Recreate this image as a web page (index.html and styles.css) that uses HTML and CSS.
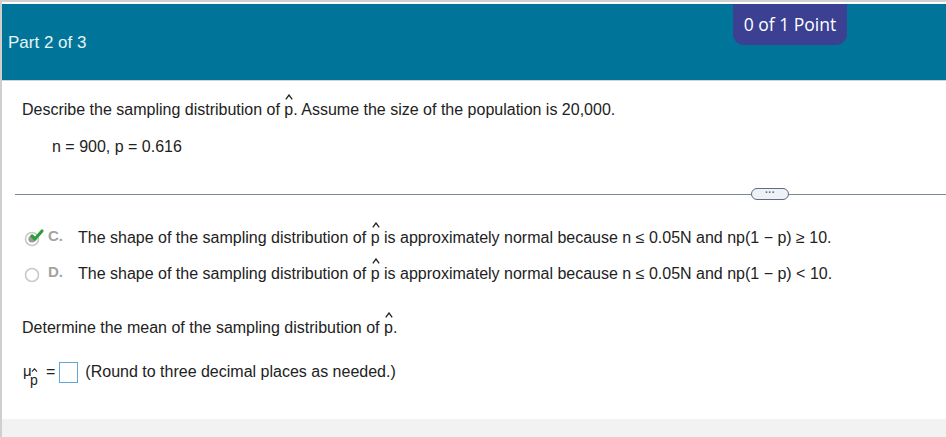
FILE: index.html
```html
<!DOCTYPE html>
<html>
<head>
<meta charset="utf-8">
<link rel="stylesheet" href="styles.css">
</head>
<body>
<div class="page">
  <div class="topgap"></div>
  <header class="header">
    <div class="part">Part 2 of 3</div>
    <div class="badge">0 of 1 Point</div>
  </header>
  <main class="content">
    <p class="q">Describe the sampling distribution of <span class="phat">p<svg class="hat" width="8" height="6" viewBox="0 0 8 6"><path d="M0.8 5.4 L4 1 L7.2 5.4" fill="none" stroke="#222" stroke-width="1.3"/></svg></span>. Assume the size of the population is 20,000.</p>
    <p class="given">n = 900, p = 0.616</p>
    <div class="divider">
      <div class="line"></div>
      <div class="more">&middot;&middot;&middot;</div>
      <div class="line short"></div>
    </div>
    <div class="opts">
      <div class="opt">
        <span class="radio">
          <svg width="22" height="20" viewBox="0 0 22 20">
            <circle cx="8" cy="11" r="6.5" fill="#fff" stroke="#c8c8c8" stroke-width="1.6"/>
            <circle cx="8" cy="11" r="3.6" fill="#9a9a9a"/>
            <path d="M8 8 L11 11 L18 3" fill="none" stroke="#2e9e3a" stroke-width="3.2" stroke-linecap="round" stroke-linejoin="round"/>
          </svg>
        </span>
        <span class="letter">C.</span>
        <span class="txt">The shape of the sampling distribution of <span class="phat">p<svg class="hat" width="8" height="6" viewBox="0 0 8 6"><path d="M0.8 5.4 L4 1 L7.2 5.4" fill="none" stroke="#222" stroke-width="1.3"/></svg></span> is approximately normal because n &le; 0.05N and np(1 &minus; p) &ge; 10.</span>
      </div>
      <div class="opt">
        <span class="radio">
          <svg width="22" height="20" viewBox="0 0 22 20">
            <circle cx="8" cy="11" r="6.5" fill="#fff" stroke="#c8c8c8" stroke-width="1.6"/>
          </svg>
        </span>
        <span class="letter">D.</span>
        <span class="txt">The shape of the sampling distribution of <span class="phat">p<svg class="hat" width="8" height="6" viewBox="0 0 8 6"><path d="M0.8 5.4 L4 1 L7.2 5.4" fill="none" stroke="#222" stroke-width="1.3"/></svg></span> is approximately normal because n &le; 0.05N and np(1 &minus; p) &lt; 10.</span>
      </div>
    </div>
    <p class="q2">Determine the mean of the sampling distribution of <span class="phat">p<svg class="hat" width="8" height="6" viewBox="0 0 8 6"><path d="M0.8 5.4 L4 1 L7.2 5.4" fill="none" stroke="#222" stroke-width="1.3"/></svg></span>.</p>
    <div class="ans">
      <span class="mu">&mu;<span class="sub">p<svg class="hat small" width="7" height="4" viewBox="0 0 8 5"><path d="M0.8 4.4 L4 1 L7.2 4.4" fill="none" stroke="#222" stroke-width="1.3"/></svg></span></span>
      <span class="eq">=</span>
      <span class="box"></span>
      <span class="hint">(Round to three decimal places as needed.)</span>
    </div>
  </main>
  <div class="footer"></div>
</div>
</body>
</html>
```
FILE: styles.css
```css
html, body {
  margin: 0;
  padding: 0;
  background: #fff;
}
body {
  font-family: Arial, "Liberation Sans", sans-serif;
  color: #222;
}
.page {
  width: 946px;
  height: 437px;
  box-sizing: border-box;
  border-left: 2px solid #cfcfcf;
  border-top: 2px solid #d0d0d0;
  display: flex;
  flex-direction: column;
  overflow: hidden;
}
.topgap {
  height: 2px;
  background: #fff;
}
.header {
  height: 76px;
  background: #007599;
  border-bottom: 1px solid #cfd3d6;
  display: flex;
  justify-content: space-between;
  align-items: flex-start;
  flex-shrink: 0;
}
.part {
  color: #e6f3f7;
  font-size: 17px;
  padding-left: 6px;
  padding-top: 29px;
  line-height: 19px;
}
.badge {
  margin-right: 99px;
  width: 114px;
  height: 41px;
  box-sizing: border-box;
  background: #3b4092;
  border-radius: 0 0 11px 11px;
  color: #fff;
  font-family: "Open Sans", sans-serif;
  font-size: 17.5px;
  font-weight: 500;
  display: flex;
  align-items: center;
  justify-content: center;
  padding-bottom: 2px;
}
.content {
  flex: 1;
  padding-left: 20px;
  font-size: 16px;
}
.content p {
  margin: 0;
}
.q {
  margin-top: 19px !important;
  line-height: 20px;
}
.given {
  margin-top: 17px !important;
  padding-left: 30px;
  line-height: 20px;
}
.phat {
  position: relative;
  display: inline-block;
}
.hat {
  position: absolute;
  left: 1px;
  top: -6px;
  display: block;
}
.divider {
  margin-top: 30px;
  margin-left: -7px;
  display: flex;
  align-items: center;
  height: 14px;
}
.line {
  flex: 1;
  height: 1px;
  background: #7d8894;
}
.line.short {
  flex: 0 0 157px;
}
.more {
  width: 38px;
  height: 12px;
  box-sizing: border-box;
  border: 1px solid #5d6d82;
  border-radius: 6px;
  background: #eef1f5;
  color: #5d6d82;
  font-size: 10px;
  line-height: 8px;
  text-align: center;
  font-weight: bold;
}
.opts {
  margin-top: 27px;
  display: flex;
  flex-direction: column;
  gap: 16px;
}
.opt {
  display: flex;
  align-items: center;
  height: 20px;
}
.radio {
  width: 24px;
  margin-left: 2px;
  display: flex;
  align-items: center;
}
.radio svg {
  display: block;
}
.letter {
  color: #a3a3a3;
  width: 30px;
  font-size: 15px;
  font-weight: bold;
  position: relative;
  top: -3px;
}
.txt {
  line-height: 20px;
}
.q2 {
  margin-top: 34px !important;
  line-height: 20px;
}
.ans {
  margin-top: 23px;
  display: flex;
  align-items: center;
  height: 22px;
}
.mu {
  position: relative;
  display: inline-block;
  width: 18px;
  padding-left: 1px;
  font-size: 15px;
  top: -2px;
}
.sub {
  position: absolute;
  left: 8px;
  top: 10px;
  font-size: 14px;
  display: inline-block;
}
.hat.small {
  top: -4px;
  left: 1px;
}
.eq {
  margin-left: 5px;
  margin-right: 4px;
}
.box {
  width: 19px;
  height: 21px;
  border: 1px solid #63a6d6;
  box-sizing: border-box;
}
.hint {
  margin-left: 7px;
}
.footer {
  height: 18px;
  background: #f2f2f2;
  flex-shrink: 0;
}
```
